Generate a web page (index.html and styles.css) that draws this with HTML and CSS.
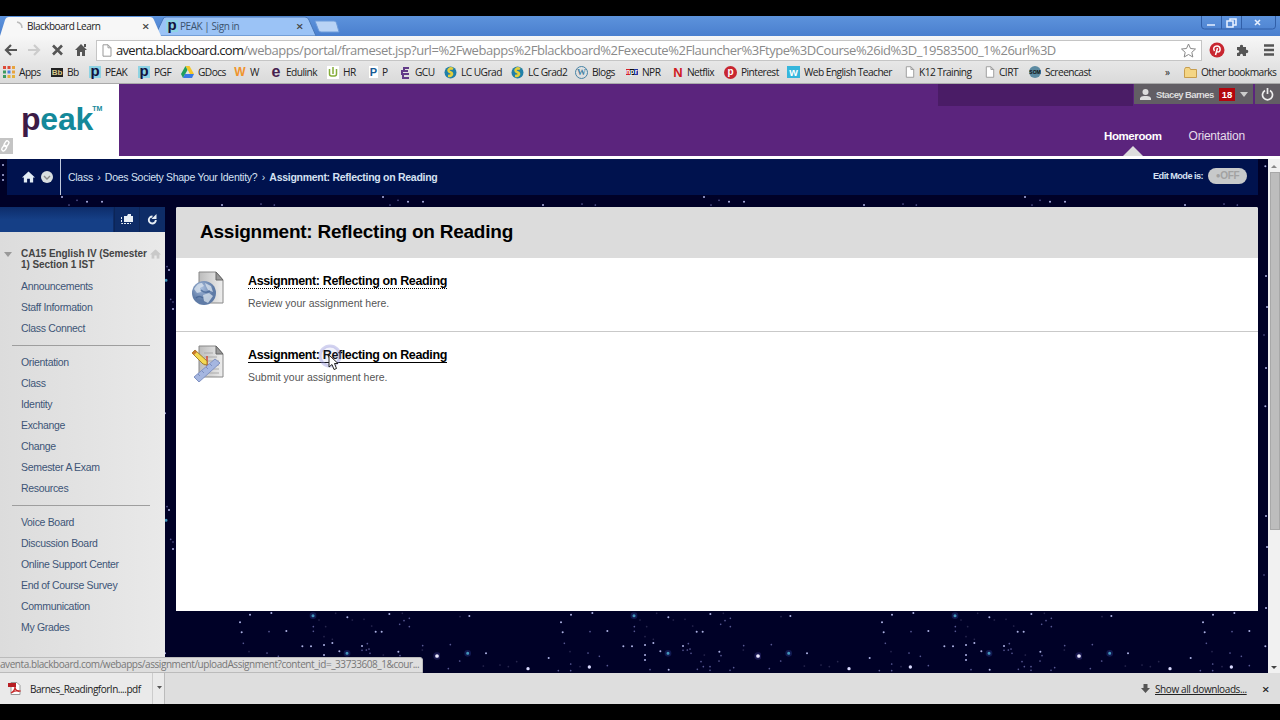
FILE: index.html
```html
<!DOCTYPE html>
<html lang="en">
<head>
<meta charset="utf-8">
<title>Blackboard Learn</title>
<link rel="stylesheet" href="styles.css">
</head>
<body>
<svg class="defs" width="0" height="0">
  <defs>
    <symbol id="page" viewBox="0 0 10 13"><path d="M1 .8h5l3 3v8.400H1zM6 .8v3h3" fill="#fff" stroke="#999"/></symbol>
    <symbol id="lc" viewBox="0 0 13 13"><circle cx="6.500" cy="6.500" r="6" fill="#207fa8"/><path d="M9 3C5 1 3 5 6 6s3 4-2 4" fill="none" stroke="#e4cf3c" stroke-width="2.500"/></symbol>
    <symbol id="house" viewBox="0 0 14 12"><path d="M7 0l7 6.500h-2V12H8.500V8h-3v4H2V6.500H0z"/></symbol>
    <symbol id="sheet" viewBox="0 0 34 36"><path d="M7 2h17l7 8v23H7z" fill="url(#sg)" stroke="#888"/><path d="M24 2v8h7z" fill="#999" stroke="#666"/></symbol>
    <linearGradient id="sg"><stop offset="0" stop-color="#bcbcbc"/><stop offset="1" stop-color="#eee"/></linearGradient>
    <radialGradient id="eg" cx=".4" cy=".3"><stop offset="0" stop-color="#a8bede"/><stop offset="1" stop-color="#5f7ba6"/></radialGradient>
  </defs>
</svg>
<div class="screen">
  <div class="tabs">
    <svg class="tab-shapes" viewBox="0 0 345 20" width="345" height="20">
      <path d="M155 20l8-17q1-2 3-2h139q3 0 4 3l7 16z" fill="#9bc3f6" stroke="#4a78b8"/>
      <path d="M0 20L5 4q1-3 4-3h141q3 0 4 3l7 16z" fill="#f7f7f7"/>
      <path d="M315 5h19q2 0 2.500 2l2.500 9h-18q-2 0-2.500-2z" fill="#b9d3f5" stroke="#6d9bda"/>
      <path d="M17 6q5 1 5 6" fill="none" stroke="#bbb" stroke-width="1.500"/>
    </svg>
    <span class="tab one">Blackboard Learn</span><span class="x">×</span>
    <span class="pk tabicon">p</span><span class="tab two">PEAK | Sign in</span><span class="x">×</span>
    <svg class="winbtns" width="75" height="14" viewBox="0 0 75 14"><path d="M.5 0v10q0 3 3 3h68q3 0 3-3V0M20.500 0v13M40.500 0v13" fill="none" stroke="#315fa8"/><path d="M6 9h8M26 5h6v6h-6zM29 5V3h6v6h-3" fill="none" stroke="#e5efff" stroke-width="1.600"/><path d="M54 4l5 5M59 4l-5 5" stroke="#e5efff" stroke-width="1.600"/></svg>
  </div>
  <div class="toolbar">
    <svg width="96" height="28" viewBox="0 0 96 28"><g fill="none" stroke="#555" stroke-width="2.200"><path d="M6 14h11M11 9l-5 5 5 5"/><path d="M28 14h11M34 9l5 5-5 5" stroke="#ccc"/><path d="M53 9.500l9 9M62 9.500l-9 9" stroke-width="2.600"/></g><path d="M81 8l6 6h-2v6h-3v-4h-2v4h-3v-6h-2zM84 8h2v3h-2z" fill="#555"/></svg>
    <div class="url">
      <svg width="10" height="13"><use href="#page"/></svg>
      <span class="addr"><b>aventa.blackboard.com</b>/webapps/portal/frameset.jsp?url=%2Fwebapps%2Fblackboard%2Fexecute%2Flauncher%3Ftype%3DCourse%26id%3D_19583500_1%26url%3D</span>
      <svg class="star" width="15" height="15" viewBox="0 0 15 15"><path d="M7.500 1l2 4.500 5 .5-3.700 3.300 1 4.700-4.300-2.500L3.200 14l1-4.700L.5 6l5-.5z" fill="#fff" stroke="#888"/></svg>
    </div>
    <svg class="tools" width="76" height="28" viewBox="0 0 76 28"><circle cx="13" cy="14" r="7.500" fill="#c82630"/><path d="M10.500 15c-2-3 0-5 2.500-5 4 0 4 6 1 6-1.500 0-1.500-1-1.500-1M13.500 12l-2 7" fill="none" stroke="#fff" stroke-width="1.500"/><path d="M33 11h3c-1-3 4-3 3 0h3v3c3-1 3 4 0 3v3h-3c0-3-3-3-3 0h-3v-3c3 0 3-3 0-3z" fill="#555"/><path d="M60 9.500h10M60 14h10M60 18.500h10" stroke="#555" stroke-width="2.400"/></svg>
  </div>
  <div class="bookmarks">
    <div><svg width="12" height="12" viewBox="0 0 12 12"><path d="M0 1.500h3M4.500 1.500h3" stroke="#dd4b39" stroke-width="3"/><path d="M9 1.500h3M9 6h3" stroke="#e8a33d" stroke-width="3"/><path d="M0 6h3M0 10.500h3" stroke="#3f9b62" stroke-width="3"/><path d="M4.500 6h3" stroke="#4a80e0" stroke-width="3"/><path d="M4.500 10.500h3M9 10.500h3" stroke="#e3b13c" stroke-width="3"/></svg><span>Apps</span></div>
    <div><i class="bb">Bb</i><span>Bb</span></div>
    <div><i class="pk">p</i><span>PEAK</span></div>
    <div><i class="pk">p</i><span>PGF</span></div>
    <div><svg width="13" height="12" viewBox="0 0 13 12"><path d="M4.500 0h4L13 8H9z" fill="#f4c629"/><path d="M4.500 0L0 8l2 4 4.500-8z" fill="#209f5c"/><path d="M4 8h9l-2 4H2z" fill="#3979e5"/></svg><span>GDocs</span></div>
    <div><i class="w">W</i><span>W</span></div>
    <div><i class="e">e</i><span>Edulink</span></div>
    <div><svg width="12" height="13" viewBox="0 0 12 13"><path d="M0 0h12v13H0z" fill="#fff"/><path d="M2.500 3v5q0 2 2 2h3q2 0 2-2V3M6 1v7" fill="none" stroke="#85ad39" stroke-width="1.500"/></svg><span>HR</span></div>
    <div><i class="pw">P</i><span>P</span></div>
    <div><svg width="11" height="13" viewBox="0 0 11 13"><path d="M9 2H4v3h4M7 5H2v3h5M9 8H3v4h6" fill="none" stroke="#633c88" stroke-width="2"/></svg><span>GCU</span></div>
    <div><svg width="13" height="13"><use href="#lc"/></svg><span>LC UGrad</span></div>
    <div><svg width="13" height="13"><use href="#lc"/></svg><span>LC Grad2</span></div>
    <div><i class="wp">W</i><span>Blogs</span></div>
    <div><i class="npr"><em>n</em><em>p</em><em>r</em></i><span>NPR</span></div>
    <div><i class="nf">N</i><span>Netflix</span></div>
    <div><i class="pin">p</i><span>Pinterest</span></div>
    <div><i class="wet">w</i><span>Web English Teacher</span></div>
    <div><svg width="10" height="12"><use href="#page"/></svg><span>K12 Training</span></div>
    <div><svg width="10" height="12"><use href="#page"/></svg><span>CIRT</span></div>
    <div><i class="som">SOM</i><span>Screencast</span></div>
    <div>»</div>
    <div><svg width="13" height="11" viewBox="0 0 13 11"><path d="M.5 2.500L1.500.5h4l1 2h6v8H.5z" fill="#f4d584" stroke="#c79d4d"/></svg><span>Other bookmarks</span></div>
  </div>
  <div class="banner">
    <div class="logo"><span class="word"><b>p</b>eak</span><sup>TM</sup><svg class="link" width="13" height="16" viewBox="0 0 13 16"><path d="M0 0h13v16H0z" fill="#c4c4c4"/><g fill="none" stroke="#fff" stroke-width="1.400"><rect x="4.500" y="2.500" width="3.500" height="6" rx="1.700" transform="rotate(35 6 6)"/><rect x="2.500" y="7" width="3.500" height="6" rx="1.700" transform="rotate(35 4 10)"/></g></svg></div>
    <div class="purple">
      <div class="account">
        <div class="dark"></div>
        <div class="user"><svg width="11" height="11" viewBox="0 0 11 11"><circle cx="5.500" cy="3" r="3" fill="#ddd"/><path d="M0 11V9q1-2 4-2h3q3 0 4 2v2z" fill="#ddd"/></svg><span>Stacey Barnes</span><b>18</b><svg width="8" height="5"><path d="M0 0h8L4 5z" fill="#ccc"/></svg></div>
        <div class="power"><svg width="13" height="13" viewBox="0 0 13 13"><path d="M4 2.500a5 5 0 1 0 5 0M6.500 0v6" fill="none" stroke="#eee" stroke-width="1.700"/></svg></div>
      </div>
      <div class="menu"><span class="on">Homeroom</span><span>Orientation</span></div>
    </div>
  </div>
  <div class="stage">
    <svg class="sky" width="1268" height="514" viewBox="0 159 1268 514">
      <defs><pattern id="stars" x="440" y="590" width="321" height="240" patternUnits="userSpaceOnUse">
        <g transform="scale(.33333)" fill="none" stroke-linecap="round">
          <path stroke="#a9aee0" stroke-width="6" d="M88 78h.1M393 74h.1M457 69h.1M363 97h.1M368 127h.1M502 123h.1M550 169h.1M576 169h.1M615 195h.1M615 210h.1M640 159h.1M661 184h.1M685 82h.1M770 125h.1M788 125h.1M811 72h.1M138 190h.1M326 204h.1M686 239h.1M838 185h.1M615 165h.1M729 168h.1M867 275h.1M912 275h.1M792 261h.1M309 285h.1M150 480h.1M162 597h.1M552 498h.1M555 591h.1M552 54h.1"/>
          <path stroke="#585994" stroke-width="5" d="M31 164h.1M59 213h.1M25 236h.1M373 160h.1M450 125h.1M444 189h.1M478 199h.1M502 227h.1M583 110h.1M583 124h.1M630 239h.1M745 161h.1M753 190h.1M750 177h.1M742 180h.1M729 181h.1M842 103h.1M855 92h.1M871 85h.1M871 110h.1M843 197h.1M837 213h.1M783 215h.1M790 230h.1M810 230h.1M772 238h.1M810 241h.1M870 241h.1M881 233h.1M911 167h.1M355 242h.1M392 222h.1M392 242h.1M813 285h.1M837 271h.1M426 282h.1M466 285h.1M155 568h.1M162 576h.1M144 470h.1M546 675h.1"/>
          <path stroke="#27264e" stroke-width="5" d="M620 110h.1M650 70h.1M700 90h.1M735 88h.1M758 108h.1M615 140h.1M600 90h.1M850 70h.1M910 180h.1M390 185h.1M180 225h.1M205 230h.1M230 215h.1M420 230h.1M793 195h.1M60 80h.1M130 228h.1M640 148h.1"/>
          <path stroke="#101850" stroke-width="20" d="M83 190h.1M684 190h.1M582 77h.1"/>
          <path stroke="#4296bc" stroke-width="9" d="M83 190h.1M684 190h.1M582 77h.1M141 511h.1"/>
          <path stroke="#dadaff" stroke-width="10" d="M264 236h.1M448 231h.1"/>
          <path stroke="#17164e" stroke-width="22" d="M954 198h.1"/><path stroke="#eceaff" stroke-width="11" d="M954 198h.1"/>
        </g></pattern></defs>
      <rect y="159" width="1268" height="514" fill="#000127"/><rect y="159" width="1268" height="514" fill="url(#stars)"/>
    </svg>
    <div class="main">
      <div class="crumbs">
        <div class="homebox"><svg width="13" height="12" fill="#e2ecf5"><use href="#house"/></svg><svg width="12" height="12" viewBox="0 0 12 12"><circle cx="6" cy="6" r="6" fill="#d8dee0"/><path d="M3 5l3 3 3-3" fill="none" stroke="#888" stroke-width="1.400"/></svg></div>
        <div class="trail"><span>Class</span><i>›</i><span>Does Society Shape Your Identity?</span><i>›</i><b>Assignment: Reflecting on Reading</b></div>
        <div class="edit"><span>Edit Mode is:</span><b><small>●</small>OFF</b></div>
      </div>
      <div class="cols">
        <div class="side">
          <div class="sidehead"><svg width="52" height="25" viewBox="0 0 52 25"><path d="M1.500 0v25M26.500 0v25" stroke="#0c2557"/><path d="M11 9h3l1-2h3v2h2v6h-9z" fill="#e7eef5"/><path d="M8.500 10v6.500H18" fill="none" stroke="#e7eef5" stroke-dasharray="2 1"/><path d="M39.500 9.500a3.500 3.500 0 1 0 3.300 3.500" fill="none" stroke="#e7eef5" stroke-width="1.900"/><path d="M38.500 12L43.500 7v5z" fill="#e7eef5"/></svg></div>
          <div class="sidebody">
            <div class="course"><svg class="tri" width="8" height="5"><path d="M0 0h8L4 5z" fill="#999"/></svg><b>CA15 English IV (Semester<br>1) Section 1 IST</b><svg width="11" height="10" fill="#c9c9c9" viewBox="0 0 14 12"><use href="#house"/></svg></div>
            <div class="links"><a>Announcements</a><a>Staff Information</a><a>Class Connect</a></div>
            <div class="links"><a>Orientation</a><a>Class</a><a>Identity</a><a>Exchange</a><a>Change</a><a>Semester A Exam</a><a>Resources</a></div>
            <div class="links"><a>Voice Board</a><a>Discussion Board</a><a>Online Support Center</a><a>End of Course Survey</a><a>Communication</a><a>My Grades</a></div>
          </div>
        </div>
        <div class="content">
          <h1><span>Assignment: Reflecting on Reading</span></h1>
          <div class="item">
            <svg width="34" height="36" viewBox="0 0 34 36"><use href="#sheet"/><circle cx="12" cy="23" r="12" fill="url(#eg)"/><path d="M2 19q4-7 8-6l2 3-4 2 1 4-4 1zM13 13l6 3 2 6-5-2-2-4zM11 25l6-2 4 3-5 7-4-2z" fill="#dce5ef" opacity=".75"/><path d="M4 28q3-3 7 0M9 20q4 4 9 1" fill="none" stroke="#365789" stroke-width="1.500" opacity=".6"/></svg>
            <div><h2 class="dotted">Assignment: Reflecting on Reading</h2><p>Review your assignment here.</p></div>
          </div>
          <div class="item second">
            <svg width="34" height="38" viewBox="0 0 34 38"><use href="#sheet" width="34" height="36"/><path d="M12 9h9M12 13h13M12 17h15M12 21h15M12 25h15M12 29h15" stroke="#aaa"/><path d="M15 12v12" stroke="#d14a36" stroke-width="1.500"/><path d="M0 9l3-3 12 11 0 4-4-1z" fill="#f4d953" stroke="#a3812d"/><path d="M0 9l3-3 2 2-3 3z" fill="#ca782e"/><path d="M2 33L23 15l5 4L7 38z" fill="#a5b6e0" stroke="#8092c2"/><path d="M6 30l2 2M10 27l2 2M14 23l2 2M18 20l2 2" stroke="#7c8fc0"/></svg>
            <div><h2>Assignment: Reflecting on Reading</h2><p>Submit your assignment here.</p></div>
          </div>
          <svg class="pointer" width="28" height="32" viewBox="0 0 28 32"><circle cx="12" cy="12" r="10" fill="#9f9fe0" fill-opacity=".12" stroke="#9292da" stroke-opacity=".4" stroke-width="3"/><path d="M11 11v12l3-2.500 2 5 2.500-1-2-5h3.500z" fill="#fff" stroke="#222"/></svg>
        </div>
      </div>
    </div>
    <div class="scroll"><svg width="12" height="13"><path d="M3 9l3-3 3 3z" fill="#888"/></svg><div class="thumb"></div><svg class="down" width="12" height="10"><path d="M3 3l3 3 3-3z" fill="#444"/></svg></div>
    <div class="status"><span>aventa.blackboard.com/webapps/assignment/uploadAssignment?content_id=_33733608_1&amp;cour...</span></div>
  </div>
  <div class="downloads">
    <div class="file"><svg width="13" height="13" viewBox="0 0 13 13"><path d="M3 .5h6l3 3v9H3z" fill="#fff" stroke="#999"/><path d="M0 1h8v4H0z" fill="#b81f24"/><path d="M3 11c3-2 4-5 4-6 0 3 3 5 5 4-3-1-6 0-9 2z" fill="none" stroke="#c72a2a" stroke-width="1.200"/></svg><span>Barnes_ReadingforIn....pdf</span></div>
    <div class="drop"><svg width="5" height="3"><path d="M0 0h5L2.500 3z" fill="#555"/></svg></div>
    <div class="all"><svg width="9" height="9" viewBox="0 0 9 9"><path d="M2.500 0h4v4H9L4.500 9 0 4h2.500z" fill="#555"/></svg><span class="show"><span>Show all downloads...</span></span><i>×</i></div>
  </div>
</div>
</body>
</html>
```
FILE: styles.css
```css
* { box-sizing: border-box; }
body { margin: 0; background: #000; font-family: "Liberation Sans", Arial, sans-serif; }
.defs { position: absolute; }
svg { display: block; flex: none; }
i, em { font-style: normal; }
.screen { width: 1280px; height: 720px; padding: 16px 0; display: flex; flex-direction: column; overflow: hidden; white-space: nowrap; }
.tabs, .toolbar, .bookmarks, .downloads, .status { font-family: "Open Sans", "Noto Sans", sans-serif; }
.tabs { height: 20px; flex: none; background: linear-gradient(#5d93dc, #4a7fce); position: relative; display: flex; align-items: center; font-size: 10px; color: #222; }
.tab-shapes { position: absolute; left: 0; top: 0; }
.tab, .x, .tabicon { position: relative; }
.tab { letter-spacing: -.52px; }
.tab.one { margin-left: 27px; width: 115px; }
.tab.two { margin-left: 2px; width: 116px; color: #3b536f; letter-spacing: -.45px; }
.x { width: 8px; font-size: 13px; font-weight: 600; color: #444; }
.pk { width: 12px; height: 12px; background: #8ed3e4; color: #12143e; font: bold 15px/9px "Liberation Sans", sans-serif; text-align: center; }
.tabicon { margin-left: 16px; }
.winbtns { margin: -6px 4px 0 auto; }
.toolbar { height: 28px; flex: none; display: flex; align-items: center; background: linear-gradient(#f7f7f7, #e5e5e5); }
.url { width: 1106px; height: 21px; background: #fff; border: 1px solid #c5c5c5; display: flex; align-items: center; padding: 0 5px; }
.addr { margin-left: 4px; font-size: 13px; letter-spacing: -.45px; color: #8a8a8a; }
.addr b { font-weight: normal; color: #222; letter-spacing: -.68px; }
.star { margin-left: auto; }
.tools { margin-left: 2px; }
.bookmarks { height: 20px; flex: none; padding: 0 0 3px 3px; background: linear-gradient(#e5e5e5, #dadada); border-bottom: 1px solid #aaa; display: grid; grid-template-columns: 48px 38px 49px 43px 53px 36px 57px 42px 31px 44px 67px 64px 51px 47px 51px 63px 118px 80px 44px 136px 19px 93px; align-items: center; font-size: 10.2px; color: #222; letter-spacing: -.55px; }
.bookmarks div { display: flex; align-items: center; gap: 4px; }
.bookmarks i { flex: none; letter-spacing: 0; text-align: center; font-family: "Liberation Sans", sans-serif; font-weight: bold; width: 12px; }
.bookmarks .bb { background: #222; color: #d8c98a; font-size: 8px; line-height: 9px; }
.bookmarks .w { color: #f0932c; font-size: 12px; }
.bookmarks .e { color: #46204f; font-size: 16px; line-height: 12px; }
.bookmarks .pw { width: 9px; background: #fff; color: #195b96; font-size: 11px; line-height: 12px; }
.bookmarks .wp { width: 13px; height: 13px; border: 1px solid #4783a5; border-radius: 50%; color: #4783a5; font: bold 9px/11px "Liberation Serif", serif; }
.npr { display: flex; font-size: 7px; line-height: 6px; }
.npr em { width: 4px; background: #d32127; color: #fff; }
.npr em:nth-child(2) { background: #111; }
.npr em:nth-child(3) { background: #2338a8; }
.bookmarks .nf { color: #cf1a22; font-size: 13px; width: 10px; }
.bookmarks .pin { width: 13px; height: 13px; border-radius: 50%; background: #c82630; color: #fff; font-size: 10px; line-height: 11px; }
.bookmarks .wet { width: 13px; background: #35b6dc; color: #fff; font-size: 11px; line-height: 12px; }
.bookmarks .som { background: #5c8ba2; border-radius: 50%; font-size: 5px; line-height: 12px; color: #111; }
.banner { height: 72px; flex: none; display: flex; }
.logo { width: 119px; background: #fff; position: relative; display: flex; padding-left: 21px; color: #14899a; }
.word { font-size: 32px; font-weight: bold; line-height: 70px; letter-spacing: -.2px; }
.word b { color: #3c1b46; }
.logo sup { font-size: 7px; font-weight: bold; line-height: 10px; margin-top: 20px; margin-left: -1px; }
.link { position: absolute; left: 0; bottom: 2px; }
.purple { flex: 1; background: #5b247d; }
.account { height: 20px; display: flex; justify-content: flex-end; }
.dark { width: 195px; height: 22px; background: #4a1c66; }
.user { width: 119px; background: #625e64; margin-left: 1px; display: flex; align-items: center; padding-left: 6px; font-size: 9.5px; font-weight: bold; color: #ddd; }
.user span { margin-left: 5px; width: 63px; letter-spacing: -.6px; }
.user b { width: 16px; height: 13px; background: #b3060d; color: #fff; text-align: center; line-height: 13px; margin-right: 5px; }
.power { width: 25px; background: #625e64; margin-left: 2px; display: flex; align-items: center; justify-content: center; }
.menu { height: 52px; display: flex; justify-content: flex-end; padding: 22px 35px 0 0; font-size: 12px; line-height: 20px; color: #e5dcea; letter-spacing: -.2px; }
.menu span + span { margin-left: 27px; }
.menu .on { font-weight: bold; color: #fff; font-size: 11.5px; letter-spacing: -.4px; height: 30px; display: flex; flex-direction: column; align-items: center; }
.menu .on::after { content: ""; border: 10px solid transparent; border-top: 0; border-bottom-color: #ddd; }
.stage { height: 517px; flex: none; border-top: 3px solid #fff; position: relative; display: flex; }
.sky { position: absolute; left: 0; top: 0; }
.main { width: 1268px; position: relative; }
.crumbs { height: 36px; margin: 0 10px 12px 7px; background: #00124e; display: flex; align-items: center; color: #d5e1f2; font-size: 10.5px; letter-spacing: -.28px; }
.homebox { width: 54px; height: 36px; border-right: 1px solid #c0cadc; display: flex; align-items: center; gap: 6px; padding-left: 15px; }
.trail { display: flex; padding-left: 7px; }
.trail i { width: 12px; text-align: center; }
.edit { margin-left: auto; display: flex; align-items: center; font-size: 9.2px; font-weight: bold; padding-right: 11px; margin-top: -2px; }
.edit span { width: 55px; letter-spacing: -.55px; }
.edit b { width: 39px; height: 16px; border-radius: 8px; background: #c7c9ca; color: #a2a2a2; text-align: center; line-height: 16px; font-size: 10px; }
.edit small { font-size: 8px; line-height: 8px; vertical-align: 1px; }
.cols { display: flex; align-items: flex-start; }
.side { width: 165px; height: 466px; margin-right: 11px; display: flex; flex-direction: column; }
.sidehead { height: 25px; background: linear-gradient(#0d2c6a, #153f86 50%); display: flex; justify-content: flex-end; border-radius: 0 2px 0 0; }
.sidehead svg { background: #0e2c67; }
.sidebody { flex: 1; background: linear-gradient(90deg, #dcdcdc, #e9e9e9); padding-top: 16px; }
.course { display: flex; padding-left: 4px; height: 28px; font-size: 10px; line-height: 11px; letter-spacing: -.08px; color: #444; }
.course .tri { margin: 4px 9px 0 0; }
.course b { width: 129px; }
.course svg:last-child { margin-top: 1px; }
.links { padding-left: 21px; font-size: 10.5px; letter-spacing: -.32px; color: #3d5577; }
.links a { display: block; height: 21px; line-height: 21px; }
.links + .links { margin-top: 6px; border-top: 1px solid #9e9e9e; padding: 6px 0 0 9px; margin-left: 12px; margin-right: 15px; }
.content { width: 1082px; height: 404px; background: #fff; position: relative; border-radius: 2px 2px 0 0; }
h1 { margin: 0; height: 51px; background: #dcdcdc; padding-left: 24px; font-size: 19px; line-height: 50px; letter-spacing: -.24px; border-radius: 2px 2px 0 0; }
.item { height: 74px; display: flex; padding: 12px 0 0 16px; border-bottom: 1px solid #c9c9c9; }
.item.second { border: 0; }
.item > div { margin-left: 22px; }
h2 { margin: 4px 0 0; font-size: 12.500px; letter-spacing: -.37px; line-height: 15px; border-bottom: 1px solid #000; height: 15px; }
h2.dotted { border-bottom-style: dotted; }
p { margin: 8px 0 0; font-size: 10.5px; line-height: 13px; color: #555; }
.pointer { position: absolute; left: 142px; top: 137px; }
.scroll { width: 12px; background: #f1f1f1; position: relative; }
.thumb { height: 358px; background: #bdbdbd; border: 1px solid #a8a8a8; margin-left: 2px; }
.down { margin-top: 133px; }
.status { position: absolute; left: -1px; bottom: 0; width: 424px; height: 16px; background: #dedede; border: 1px solid #bbb; border-radius: 0 3px 0 0; font-size: 10px; letter-spacing: -.44px; line-height: 13px; color: #777; }
.downloads { height: 31px; flex: none; background: #dedede; display: flex; font-size: 10px; letter-spacing: -.4px; color: #222; }
.file { width: 152px; display: flex; align-items: center; padding-left: 8px; gap: 9px; background: #eaeaea; letter-spacing: -.48px; }
.drop { width: 13px; border-left: 1px solid #ccc; border-right: 1px solid #bbb; background: #eaeaea; padding: 13px 0 0 4px; }
.all { margin-left: auto; display: flex; align-items: center; }
.show { margin-left: 5px; width: 107px; }
.show span { text-decoration: underline; }
.all i { font-size: 13px; font-weight: 600; width: 18px; }
```
